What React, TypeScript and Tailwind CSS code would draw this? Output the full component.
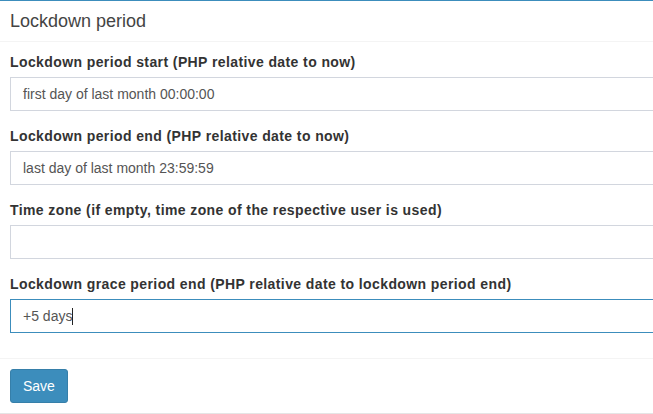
import React from "react";

const fields = [
  { label: "Lockdown period start (PHP relative date to now)", value: "first day of last month 00:00:00" },
  { label: "Lockdown period end (PHP relative date to now)", value: "last day of last month 23:59:59" },
  { label: "Time zone (if empty, time zone of the respective user is used)", value: "" },
];

export default function App() {
  return (
    <div className="w-[653px] h-[414px] overflow-hidden bg-white" style={{ fontFamily: '"Liberation Sans", Arial, sans-serif' }}>
      <div className="w-[720px] border-t border-[#3c8dbc] bg-white shadow-[0_1px_1px_rgba(0,0,0,0.1)]">
        <div className="px-[10px] py-[10px] border-b border-[#f4f4f4]">
          <h3 className="text-[18px] leading-[20px] text-[#444] m-0">Lockdown period</h3>
        </div>
        <div className="p-[10px]">
          {fields.map((f) => (
            <div key={f.label} className="mb-[15px]">
              <label className="block text-[14px] leading-[20px] font-bold tracking-[0.4px] text-[#333] mb-[5px]">{f.label}</label>
              <div className="h-[34px] border border-[#d2d6de] px-[12px] flex items-center text-[14px] text-[#555]">
                {f.value}
              </div>
            </div>
          ))}
          <div className="mb-[15px]">
            <label className="block text-[14px] leading-[20px] font-bold tracking-[0.4px] text-[#333] mb-[5px]">
              Lockdown grace period end (PHP relative date to lockdown period end)
            </label>
            <div className="h-[34px] border border-[#3c8dbc] px-[12px] flex items-center text-[14px] text-[#555]">
              <span>+5 days</span>
              <span className="inline-block w-px h-[17px] bg-[#222]" />
            </div>
          </div>
        </div>
        <div className="border-t border-[#f4f4f4] p-[10px]">
          <button className="h-[34px] px-[12px] bg-[#3c8dbc] border border-[#367fa9] rounded-[3px] text-white text-[14px]">
            Save
          </button>
        </div>
      </div>
    </div>
  );
}
